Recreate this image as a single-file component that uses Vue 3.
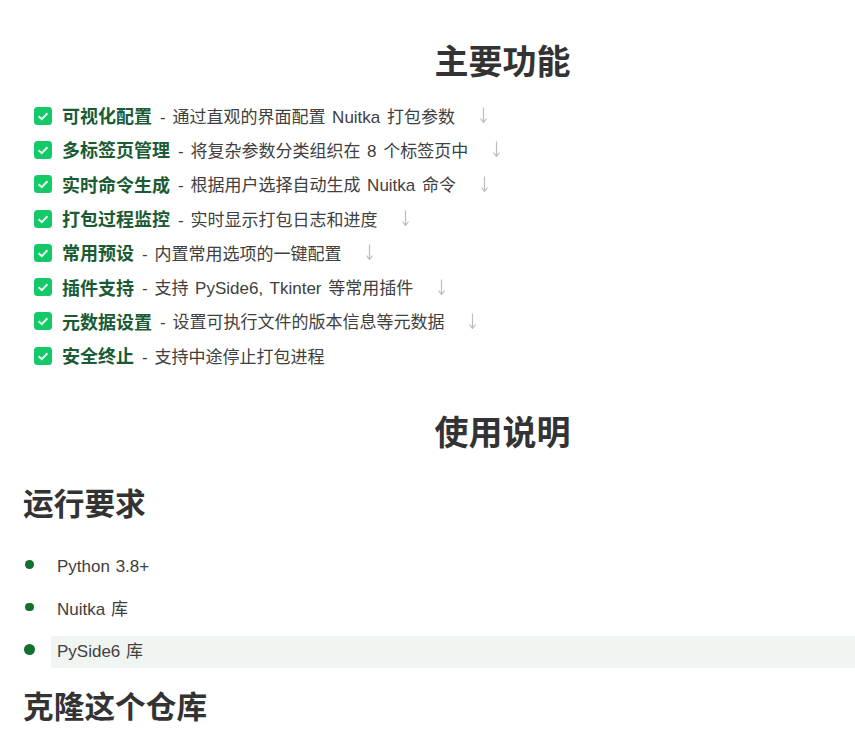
<script setup>
const features = [
  { t: '可视化配置', d: '通过直观的界面配置 Nuitka 打包参数', arrow: true },
  { t: '多标签页管理', d: '将复杂参数分类组织在 8 个标签页中', arrow: true },
  { t: '实时命令生成', d: '根据用户选择自动生成 Nuitka 命令', arrow: true },
  { t: '打包过程监控', d: '实时显示打包日志和进度', arrow: true },
  { t: '常用预设', d: '内置常用选项的一键配置', arrow: true },
  { t: '插件支持', d: '支持 PySide6, Tkinter 等常用插件', arrow: true },
  { t: '元数据设置', d: '设置可执行文件的版本信息等元数据', arrow: true },
  { t: '安全终止', d: '支持中途停止打包进程', arrow: false },
]
const reqs = ['Python 3.8+', 'Nuitka 库', 'PySide6 库']
</script>

<template>
  <div class="page">
    <h2 class="center first">主要功能</h2>
    <ul class="features">
      <li v-for="f in features" :key="f.t" class="feature">
        <svg class="check" viewBox="0 0 18 18" width="18" height="18">
          <rect x="0" y="0" width="18" height="18" rx="3.5" fill="#14c968" />
          <path d="M4.6 9.2 L7.8 12.2 L13.4 6.2" fill="none" stroke="#e6f9ee" stroke-width="2" />
        </svg>
        <strong>{{ f.t }}</strong>
        <span class="desc">- {{ f.d }}</span>
        <svg v-if="f.arrow" class="arrow" viewBox="0 0 9 16" width="9" height="16">
          <path d="M4.5 0.5 V15 M1.5 11.5 L4.5 15.5 L7.5 11.5" fill="none" stroke="#bdbdbd" stroke-width="1.2" />
        </svg>
      </li>
    </ul>
    <h2 class="center second">使用说明</h2>
    <h3 class="sub">运行要求</h3>
    <ul class="reqs">
      <li v-for="(r, i) in reqs" :key="r" class="req" :class="{ active: i === 2 }">
        <span class="dot"></span>
        <span class="req-text">{{ r }}</span>
      </li>
    </ul>
    <h3 class="sub clone">克隆这个仓库</h3>
  </div>
</template>

<style>
html, body { margin: 0; background: #fff; overflow: hidden; }
</style>

<style scoped>
.page {
  height: 731px;
  overflow: hidden;
  box-sizing: border-box;
  font-family: "Liberation Sans", "Noto Sans CJK SC", sans-serif;
  color: #404040;
  font-size: 17px;
}
.center {
  margin: 0;
  padding-left: 150px;
  text-align: center;
  font-size: 34px;
  line-height: 44px;
  font-weight: 700;
  color: #333;
}
.first { margin-top: 40px; }
.second { margin-top: 39px; }
.features { list-style: none; margin: 14px 0 0; padding: 0 0 0 34px; word-spacing: 2px; }
.feature { display: flex; align-items: center; height: 34.3px; }
.check { flex: none; margin-right: 10px; margin-top: 1px; }
strong { color: #1a5b34; font-size: 18px; font-weight: 700; }
.desc { margin-left: 8px; }
.arrow { margin-left: 24px; flex: none; }
.sub { margin: 0; font-size: 30.7px; line-height: 40px; font-weight: 700; color: #333; padding-left: 23px; }
.sub:not(.clone) { margin-top: 30px; }
.reqs { list-style: none; margin: 26px 0 0; padding: 0; word-spacing: 1px; }
.req { display: flex; align-items: center; height: 32px; margin-bottom: 10.5px; padding-left: 25px; }
.dot { width: 8.5px; height: 8.5px; border-radius: 50%; background: #12702f; margin-right: 17.5px; margin-top: -6px; flex: none; }
.req-text { flex: 1; padding-left: 6px; line-height: 32px; }
.active .req-text { background: #f1f5f2; }
.active .dot { width: 11px; height: 11px; margin-right: 16px; margin-left: -1px; }
.clone { margin-top: 20px; }
</style>
